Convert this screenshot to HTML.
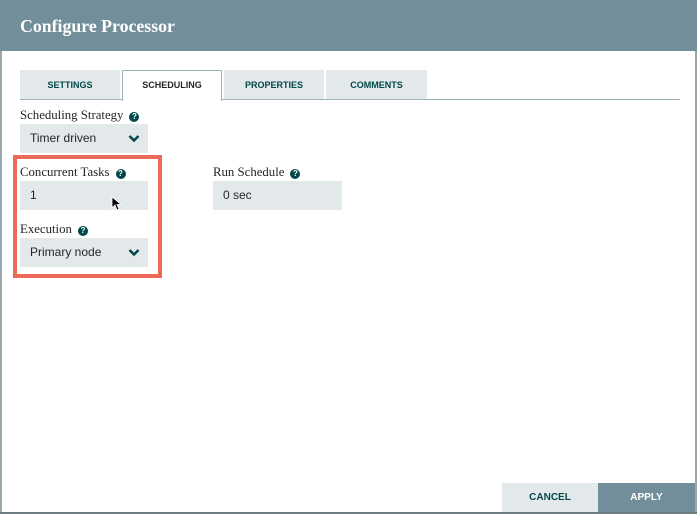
<!DOCTYPE html>
<html><head><style>
body{margin:0;width:697px;height:514px;background:#fff;position:relative;overflow:hidden;font-family:"Liberation Sans",sans-serif}
.a{position:absolute}
.hdr{left:0;top:0;width:697px;height:51px;background:#728e9b}
.hdr span{position:absolute;left:20px;top:16px;color:#fff;font:bold 17.8px "Liberation Serif",serif}
.tab{position:absolute;top:70px;height:29px;background:#e3e8eb;border:1px solid #e3e8eb;box-sizing:border-box;font:bold 9px "Liberation Sans",sans-serif;color:#004849;text-align:center;line-height:28px}
.tab.on{background:#fff;border-color:#9cb4b8;border-bottom:none;color:#262626;height:31px}
.lbl{position:absolute;font:12.8px "Liberation Serif",serif;color:#262626}
.q{display:inline-block;width:10px;height:10px;border-radius:50%;background:#004849;color:#fff;font:bold 8px "Liberation Sans",sans-serif;text-align:center;line-height:10px;margin-left:6px;vertical-align:0}
.fld{position:absolute;background:#e3e8eb;height:29px;font-size:12px;color:#262626;line-height:29px;box-sizing:border-box;padding-left:10px}
.chev{position:absolute;right:8px;top:10px}
</style></head><body>
<div class="a hdr"><span>Configure Processor</span></div>
<div class="a" style="left:0;top:51px;width:2px;height:463px;background:#9aa6ad"></div>
<div class="a" style="left:695px;top:51px;width:2px;height:463px;background:#9aa6ad"></div>
<div class="a" style="left:0;top:512px;width:697px;height:2px;background:#6d7a80"></div>
<div class="a" style="left:20px;top:99px;width:660px;height:1px;background:#9cb4b8"></div>
<div class="tab" style="left:20px;width:100px">SETTINGS</div>
<div class="tab on" style="left:122px;width:100px">SCHEDULING</div>
<div class="tab" style="left:224px;width:100px">PROPERTIES</div>
<div class="tab" style="left:326px;width:101px">COMMENTS</div>
<div class="lbl" style="left:20px;top:108px">Scheduling Strategy<span class="q">?</span></div>
<div class="fld" style="left:20px;top:124px;width:128px">Timer driven<svg class="chev" width="12" height="9" viewBox="0 0 12 9"><path d="M1.5 2l4.5 4.5L10.5 2" stroke="#004849" stroke-width="2.5" fill="none"/></svg></div>
<div class="a" style="left:13px;top:155px;width:141px;height:115px;border:4px solid #ec6a5a"></div>
<div class="lbl" style="left:20px;top:165px">Concurrent Tasks<span class="q">?</span></div>
<div class="fld" style="left:20px;top:181px;width:128px">1</div>
<svg class="a" style="left:111px;top:196px" width="10" height="15" viewBox="0 0 10 15"><path d="M1 1v11l3-3 2 5 2-1-2-4.5h4z" fill="#000" stroke="#fff" stroke-width=".8"/></svg>
<div class="lbl" style="left:213px;top:165px">Run Schedule<span class="q">?</span></div>
<div class="fld" style="left:213px;top:181px;width:129px">0 sec</div>
<div class="lbl" style="left:20px;top:222px">Execution<span class="q">?</span></div>
<div class="fld" style="left:20px;top:238px;width:128px">Primary node<svg class="chev" width="12" height="9" viewBox="0 0 12 9"><path d="M1.5 2l4.5 4.5L10.5 2" stroke="#004849" stroke-width="2.5" fill="none"/></svg></div>
<div class="a" style="left:502px;top:483px;width:96px;height:29px;background:#e3e8eb;color:#004849;font:bold 10px 'Liberation Sans',sans-serif;text-align:center;line-height:29px">CANCEL</div>
<div class="a" style="left:598px;top:483px;width:97px;height:29px;background:#728e9b;color:#fff;font:bold 10px 'Liberation Sans',sans-serif;text-align:center;line-height:29px">APPLY</div>
</body></html>
